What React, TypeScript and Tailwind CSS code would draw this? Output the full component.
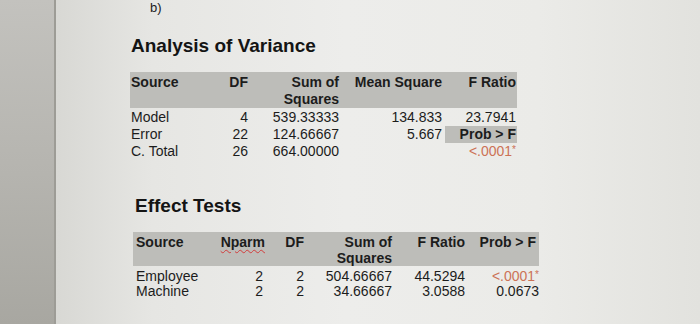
import React from "react";

const H = "font-bold";

function Sig() {
  return (
    <span className="text-[#cc7256]">
      &lt;.0001<span className="text-[10px] leading-[0px] align-[3px]">*</span>
    </span>
  );
}

export default function App() {
  return (
    <div className="w-[700px] h-[324px] flex overflow-hidden font-['Liberation_Sans',Arial,sans-serif] text-[#1c1c1c]">
      <div className="w-[56px] h-full bg-gradient-to-b from-[#c3c2be] via-[#b6b5b0] to-[#a8a7a1] border-r-2 border-[#9d9c96]" />
      <div className="flex-1 h-full bg-[linear-gradient(90deg,#d8d8d4_0%,#e6e6e3_15%,#ededeb_45%,#ebebe8_75%,#e2e2de_100%)] pl-[72px]">
        <div className="ml-[22px] text-[13px] leading-[15px]">b)</div>

        <div className="mt-[20px] ml-[3px] text-[19px] leading-[22px] font-bold text-[#141414]">
          Analysis of Variance
        </div>

        {/* ANOVA table */}
        <div className="mt-[15px] ml-[2px] w-[387px] text-[14px]">
          <div className="grid grid-cols-[90px_28px_91px_103px_75px] bg-[#bdbdb9] pt-[2px] leading-[17px] h-[36px]">
            <div className={`${H} pl-[1px]`}>Source</div>
            <div className={`${H} text-right`}>DF</div>
            <div className={`${H} text-right`}>
              Sum of
              <br />
              Squares
            </div>
            <div className={`${H} text-right`}>Mean Square</div>
            <div className={`${H} text-right pr-[1px]`}>F Ratio</div>
          </div>
          <div className="mt-[1px] grid grid-cols-[90px_28px_91px_103px_75px] leading-[17px]">
            <div className="pl-[1px]">Model</div>
            <div className="text-right">4</div>
            <div className="text-right">539.33333</div>
            <div className="text-right">134.833</div>
            <div className="text-right pr-[1px]">23.7941</div>

            <div className="pl-[1px]">Error</div>
            <div className="text-right">22</div>
            <div className="text-right">124.66667</div>
            <div className="text-right">5.667</div>
            <div className={`${H} ml-[3px] bg-[#bdbdb9] text-right pr-[1px]`}>Prob &gt; F</div>

            <div className="pl-[1px]">C. Total</div>
            <div className="text-right">26</div>
            <div className="text-right">664.00000</div>
            <div className="text-right"></div>
            <div className="text-right pr-[1px]">
              <Sig />
            </div>
          </div>
        </div>

        <div className="mt-[35px] ml-[7px] text-[19px] leading-[22px] font-bold text-[#141414]">
          Effect Tests
        </div>

        {/* Effect tests table */}
        <div className="mt-[15px] ml-[5px] w-[406px] text-[14px]">
          <div className="grid grid-cols-[86px_46px_39px_88px_73px_74px] bg-[#bdbdb9] pt-[2px] leading-[16px] h-[34px]">
            <div className={`${H} pl-[3px]`}>Source</div>
            <div className="text-right">
              <span className={`${H} underline decoration-wavy decoration-[#d23c3c] decoration-1 underline-offset-[2px]`}>
                Nparm
              </span>
            </div>
            <div className={`${H} text-right`}>DF</div>
            <div className={`${H} text-right`}>
              Sum of
              <br />
              Squares
            </div>
            <div className={`${H} text-right`}>F Ratio</div>
            <div className={`${H} text-right pr-[3px]`}>Prob &gt; F</div>
          </div>
          <div className="mt-[3px] grid grid-cols-[86px_46px_39px_88px_73px_74px] leading-[15px]">
            <div className="pl-[3px]">Employee</div>
            <div className="text-right pr-[2px]">2</div>
            <div className="text-right">2</div>
            <div className="text-right">504.66667</div>
            <div className="text-right">44.5294</div>
            <div className="text-right">
              <Sig />
            </div>

            <div className="pl-[3px]">Machine</div>
            <div className="text-right pr-[2px]">2</div>
            <div className="text-right">2</div>
            <div className="text-right">34.66667</div>
            <div className="text-right">3.0588</div>
            <div className="text-right">0.0673</div>
          </div>
        </div>
      </div>
    </div>
  );
}
